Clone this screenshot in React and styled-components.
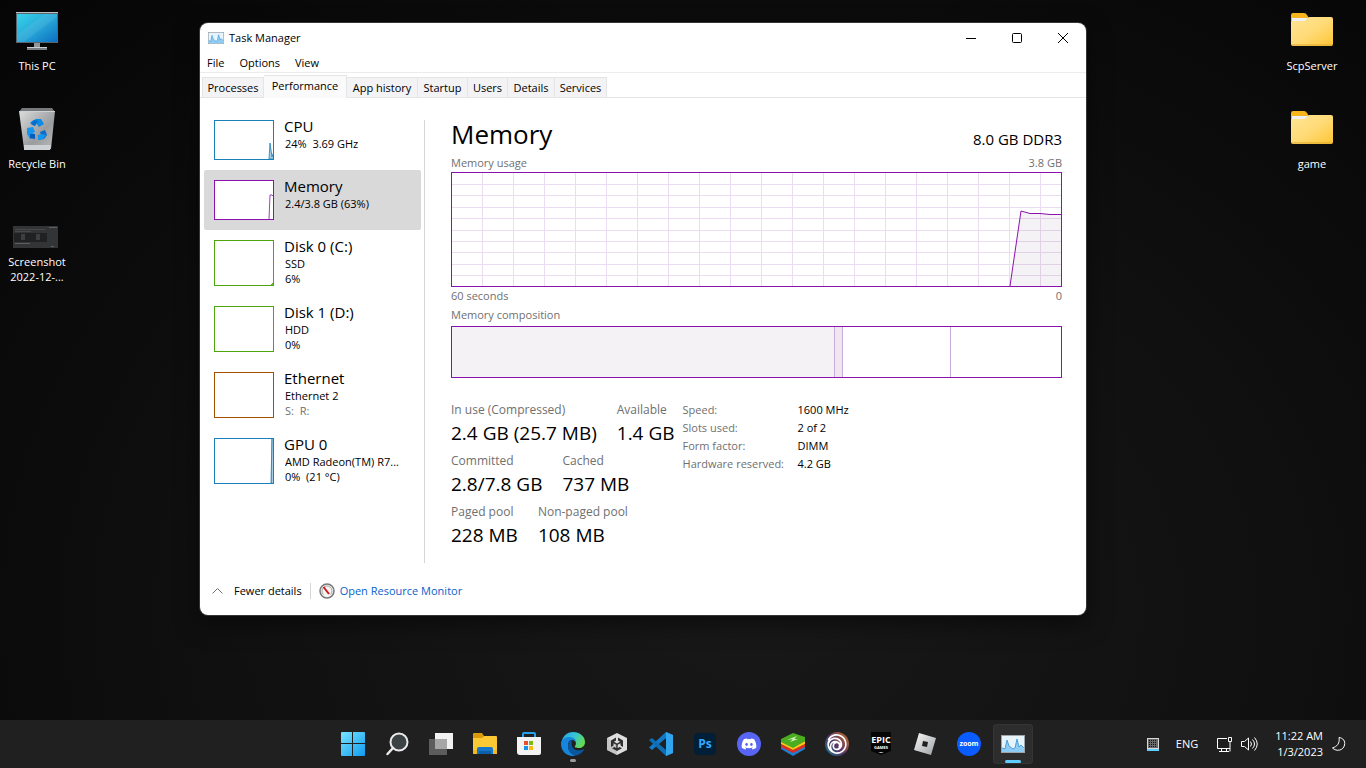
import React from 'react';
import styled, { createGlobalStyle, css } from 'styled-components';
import { FaDiscord } from 'react-icons/fa';
import { SiUbisoft } from 'react-icons/si';

const GlobalStyle = createGlobalStyle`
  * {
    box-sizing: border-box;
  }

  body {
    margin: 0;
    background: #060606;
    font-family: 'Open Sans', 'Noto Sans', sans-serif;
    font-size: 11px;
    line-height: 16px;
    color: #000;
  }

  button {
    margin: 0;
    padding: 0;
    border: 0;
    background: none;
    color: inherit;
    font: inherit;
    text-align: left;
  }

  svg {
    display: block;
    flex: none;
  }
`;

const Page = styled.div`
  display: flex;
  flex-direction: column;
  min-height: 100vh;
`;

const Desktop = styled.main`
  position: relative;
  flex: 1;
  display: flex;
  justify-content: space-between;
  padding-right: 17px;
  background: radial-gradient(ellipse at 55% 85%, #181818 0%, #111 45%, #050505 100%);
`;

const IconColumn = styled.div`
  display: flex;
  flex-direction: column;
  width: 74px;
`;

const Shortcut = styled.button`
  display: flex;
  flex-direction: column;
  align-items: center;
  height: 98px;
  padding-top: 8px;
  color: #fff;
  line-height: 15px;
  text-align: center;
`;

const ShortcutArt = styled.span`
  display: flex;
  align-items: center;
  justify-content: center;
  height: 50px;
  padding-bottom: 4px;
  flex: none;
`;

/* window */

const Window = styled.section`
  position: absolute;
  top: 23px;
  left: 200px;
  right: 280px;
  background: #fff;
  border-radius: 8px;
  box-shadow: 0 0 0 1px #353535, 0 8px 24px rgba(0, 0, 0, 0.5);
  overflow: hidden;
`;

const TitleBar = styled.header`
  display: flex;
  align-items: center;
  gap: 5px;
  height: 30px;
  padding-left: 8px;
`;

const Title = styled.h1`
  flex: 1;
  margin: 0;
  font-size: 11px;
  font-weight: 400;
`;

const CaptionButtons = styled.div`
  display: flex;
`;

const CaptionButton = styled.button`
  display: flex;
  align-items: center;
  justify-content: center;
  width: 46px;
  height: 30px;
`;

const MenuBar = styled.nav`
  display: flex;
  align-items: center;
  gap: 15px;
  height: 20px;
  padding-left: 7px;
  border-bottom: 1px solid #ececec;
`;

const TabStrip = styled.div`
  display: flex;
  align-items: flex-end;
  height: 25px;
  padding-left: 2px;
  box-shadow: inset 0 -1px #e5e5e5;
`;

const Tab = styled.button`
  width: ${({ $width }) => $width}px;
  height: 21px;
  border: 1px solid #e5e5e5;
  border-left-width: 0;
  background: #f3f2f5;
  text-align: center;
  white-space: nowrap;

  &:first-child {
    border-left-width: 1px;
  }

  ${({ $active }) => $active && css`
    height: 23px;
    padding-bottom: 2px;
    border-bottom: 0;
    background: #fafafa;
  `}
`;

const Body = styled.div`
  display: flex;
  min-height: 469px;
  padding: 12px 24px 4px 4px;
`;

const Sidebar = styled.div`
  width: 217px;
  flex: none;
`;

const Resource = styled.button`
  display: flex;
  align-items: flex-start;
  gap: 10px;
  width: 100%;
  height: ${({ $tall }) => ($tall ? 66 : 60)}px;
  padding: 6px 10px;
  border-radius: 2px;
  background: ${({ $selected }) => ($selected ? '#d9d9d9' : 'transparent')};
`;

const Thumb = styled.svg`
  width: 60px;
  height: ${({ $tall }) => ($tall ? 46 : 40)}px;
  margin-top: 4px;
  border: 1px solid ${({ $color }) => $color};
  background: #fff;
`;

const ResourceText = styled.span`
  display: flex;
  flex-direction: column;
  min-width: 0;
`;

const ResourceName = styled.span`
  font-size: 15px;
  line-height: 20px;
`;

const ResourceLine = styled.span`
  padding-left: 1px;
  color: ${({ $muted }) => ($muted ? '#707070' : '#000')};
  line-height: 15px;
  white-space: pre;
`;

const Divider = styled.div`
  width: 1px;
  margin: 10px 26px 0 3px;
  background: #d5d5d5;
`;

const Details = styled.div`
  flex: 1;
  min-width: 0;
`;

const Heading = styled.div`
  display: flex;
  align-items: flex-end;
  justify-content: space-between;
  height: 44px;
`;

const ResourceTitle = styled.h2`
  margin: 0;
  font-size: 26px;
  font-weight: 400;
  line-height: 40px;
`;

const Capacity = styled.span`
  font-size: 15px;
  line-height: 30px;
`;

const Caption = styled.div`
  display: flex;
  justify-content: space-between;
  height: ${({ $height }) => $height}px;
  color: #707070;
  line-height: 18px;
`;

const Graph = styled.svg`
  width: 100%;
  height: 115px;
  border: 1px solid #8b12ae;
`;

const Composition = styled.div`
  display: flex;
  height: 52px;
  border: 1px solid #8b12ae;
`;

const Segment = styled.div`
  flex: ${({ $share }) => $share} 0 0;
  background: ${({ $fill }) => $fill};

  & + & {
    border-left: 1px solid #c9add6;
  }
`;

const Stats = styled.div`
  display: flex;
  gap: 8px;
  padding-top: 23px;
`;

const StatRow = styled.dl`
  display: flex;
  gap: 20px;
  margin: 0;
  height: 51px;
`;

const StatLabel = styled.dt`
  color: #707070;
  font-size: 12px;
  line-height: 18px;
`;

const StatValue = styled.dd`
  margin: 0;
  font-size: 19px;
  line-height: 28px;
`;

const Facts = styled.dl`
  display: grid;
  grid-template-columns: 115px auto;
  grid-auto-rows: 18px;
  align-content: start;
  margin: 0;
  line-height: 18px;

  dt {
    color: #707070;
  }

  dd {
    margin: 0;
  }
`;

const Footer = styled.footer`
  display: flex;
  align-items: center;
  height: 48px;
  padding-left: 12px;
`;

const FewerButton = styled.button`
  display: flex;
  align-items: center;
  gap: 11px;
  padding-right: 8px;
`;

const MonitorLink = styled.a`
  display: flex;
  align-items: center;
  gap: 5px;
  padding-left: 8px;
  border-left: 1px solid #d5d5d5;
  color: #0a5fcb;
  text-decoration: none;
`;

/* taskbar */

const Taskbar = styled.nav`
  display: grid;
  grid-template-columns: 1fr auto 1fr;
  align-items: center;
  height: 48px;
  background: #202020;
  color: #fff;
`;

const Apps = styled.div`
  grid-column: 2;
  display: flex;
  gap: 4px;
`;

const AppButton = styled.button`
  position: relative;
  display: flex;
  align-items: center;
  justify-content: center;
  width: 40px;
  height: 40px;
  border-radius: 4px;

  ${({ $state }) => $state && css`
    &::after {
      content: '';
      position: absolute;
      bottom: ${$state === 'active' ? 1 : 2}px;
      left: 50%;
      width: ${$state === 'active' ? 16 : 6}px;
      height: 3px;
      border-radius: 2px;
      background: ${$state === 'active' ? '#60cdff' : '#9a9a9a'};
      transform: translateX(-50%);
    }
  `}

  ${({ $state }) => $state === 'active' && css`
    background: #2d2d2d;
    box-shadow: inset 0 0 0 1px #353535;
  `}
`;

const Tray = styled.div`
  display: flex;
  align-items: center;
  justify-content: flex-end;
  padding-right: 19px;
`;

const TrayButton = styled.button`
  display: flex;
  align-items: center;
  gap: 8px;
  margin-right: ${({ $space }) => $space || 0}px;
  text-align: right;
`;

const MonitorArt = () => (
  <svg width="44" height="40" viewBox="0 0 44 40">
    <defs>
      <linearGradient id="screen" x1="0" y1="0" x2="1" y2="1">
        <stop offset="0" stopColor="#35d5ea" />
        <stop offset="0.5" stopColor="#28a8d8" />
        <stop offset="1" stopColor="#0b6fc2" />
      </linearGradient>
    </defs>
    <path d="M1 1h42v31H1z" fill="#59656d" />
    <path d="M1 1h42v1H1z" fill="#b8c0c4" />
    <path d="M2 3h40v28H2z" fill="url(#screen)" />
    <path d="M2 24L30 3h12v3L9 31H2z" fill="#fff" opacity="0.07" />
    <path d="M19 32h6v4h-6z" fill="#8e979c" />
    <path d="M12 36h20v3H12z" fill="#777f85" />
    <path d="M12 36h20v1H12z" fill="#c9ced1" />
  </svg>
);

const BinArt = () => (
  <svg width="38" height="44" viewBox="0 0 38 44">
    <defs>
      <linearGradient id="bin" x1="0" y1="0" x2="1" y2="1">
        <stop offset="0" stopColor="#dcdcdc" />
        <stop offset="0.6" stopColor="#9a9c9e" />
        <stop offset="1" stopColor="#b9bbbd" />
      </linearGradient>
    </defs>
    <path d="M4 1h30l3 4H1z" fill="#77797b" />
    <path d="M1 4h36l-4 38H6z" fill="url(#bin)" />
    <path d="M1 4h36v1H1zM6 38h27l-1 5H6z" fill="#cfd2d4" />
    <path d="M14 14l4-2h5l3 5-5 3-3-4-2 3-4-3z" fill="#0a8be6" />
    <path d="M13 17l3-4 4 1-3 5zM27 23l2 5-3 4-6 1v-5h3l-1-3z" fill="#0a6ccc" />
    <path d="M20 28l4-1 4 1-3 4-5 1zM9 21l6-1 2 5-2 1 2 5-5 1-3-5z" fill="#1495f0" />
    <path d="M12 27h5v5l-5-1z" fill="#075cb8" />
  </svg>
);

const ScreenshotArt = () => (
  <svg width="48" height="44" viewBox="0 -21 48 44">
    <path d="M0 0h45v22H0z" fill="#333435" />
    <path d="M2 3h30v1H2zM2 5h16v1H2z" fill="#484949" />
    <path d="M1 7h33v9H1z" fill="#202122" />
    <path d="M8 8h4v6H8zM23 8h4v6h-4z" fill="#3d3e3f" />
    <path d="M2 17h15v1H2zM38 20h3v1h-3zM36 1h8v1h-8z" fill="#5e5f60" />
  </svg>
);

const FolderArt = () => (
  <svg width="44" height="38" viewBox="0 0 44 38">
    <defs>
      <linearGradient id="folder" x1="0" y1="0" x2="1" y2="1">
        <stop offset="0" stopColor="#ffe596" />
        <stop offset="0.5" stopColor="#ffdb78" />
        <stop offset="1" stopColor="#fdc532" />
      </linearGradient>
    </defs>
    <path d="M1 3q0-2 2-2h11q2 0 3 2l2 3H42v20H1z" fill="#f7b51c" />
    <path d="M2 6h16l-3 4H2z" fill="#eef0f4" />
    <path d="M1 10q0-1 1-1h12q2 0 3-2l2-2h22q2 0 2 2v25q0 2-2 2H3q-2 0-2-2z" fill="url(#folder)" />
    <path d="M2 33h40" stroke="#dfa72c" />
  </svg>
);

const TaskIcon = ({ width = 16, height = 12 }) => (
  <svg width={width} height={height} viewBox="0 0 24 18" preserveAspectRatio="none">
    <path d="M0 0h24v18H0z" fill="#9da6ac" />
    <path d="M1 1h22v16H1z" fill="#e8f4fb" />
    <path d="M1 13l3 1 2-9 2 6 4 3 2-1 2-9 2 8 2-2 3 4v3H1z" fill="#8dcdf3" />
    <path d="M1 13l3 1 2-9 2 6 4 3 2-1 2-9 2 8 2-2 3 3" fill="none" stroke="#4a9fdf" />
  </svg>
);

const GaugeIcon = () => (
  <svg width="16" height="16" viewBox="0 0 16 16">
    <circle cx="8" cy="8" r="7" fill="#f5f5f5" stroke="#777" strokeWidth="1.5" />
    <path d="M4.500 11.500a5 5 0 1 1 7 0" fill="none" stroke="#a7a7a7" />
    <path d="M4.500 4l5.500 7" stroke="#d01616" strokeWidth="2" />
  </svg>
);

const StartIcon = () => (
  <svg width="24" height="24" viewBox="0 0 24 24">
    <defs>
      <linearGradient id="start" gradientUnits="userSpaceOnUse" x1="0" y1="0" x2="24" y2="24">
        <stop offset="0" stopColor="#79e4ff" />
        <stop offset="1" stopColor="#109bf0" />
      </linearGradient>
    </defs>
    <path d="M0 1q0-1 1-1h10v11H0zM12 0h11q1 0 1 1v10H12zM0 12h11v12H1q-1 0-1-1zM12 12h12v11q0 1-1 1H12z" fill="url(#start)" />
  </svg>
);

const SearchIcon = () => (
  <svg width="24" height="24" viewBox="0 0 24 24" fill="#3c4144" stroke="#eaeaea" strokeLinecap="round">
    <circle cx="14" cy="10" r="8.5" strokeWidth="2" />
    <path d="M8 16l-5.500 6" strokeWidth="2.500" />
  </svg>
);

const TaskViewIcon = () => (
  <svg width="24" height="24" viewBox="0 0 24 24">
    <path d="M6 1h18v16H6z" fill="#f1f1f1" />
    <path d="M0 7h18v16H0z" fill="#5c5c5c" />
    <path d="M6 7h12v10H6z" fill="#a6a6a6" />
  </svg>
);

const ExplorerIcon = () => (
  <svg width="24" height="24" viewBox="0 0 24 24">
    <path d="M0 2q0-1 1-1h8l2 3-2 3H0z" fill="#d99a0b" />
    <path d="M0 6h9l2-2h12q1 0 1 1v17H0z" fill="#fbc934" />
    <path d="M0 18h24v4H0z" fill="#f2b824" />
    <path d="M4 22v-5q0-2 2-2h12q2 0 2 2v5z" fill="#1477cc" />
    <path d="M6 19h12v3H6z" fill="#0d5faa" />
  </svg>
);

const StoreIcon = () => (
  <svg width="24" height="24" viewBox="0 0 24 24">
    <path d="M6 6V2q0-1 1-1h10q1 0 1 1v4" fill="none" stroke="#24a2ec" strokeWidth="2" />
    <path d="M0 5h24v16q0 2-2 2H3q-3 0-3-3z" fill="#f3f3f3" />
    <path d="M7 9h4v4H7z" fill="#e8502a" />
    <path d="M12 9h4v4h-4z" fill="#7dba10" />
    <path d="M7 14h4v4H7z" fill="#1695e6" />
    <path d="M12 14h4v4h-4z" fill="#fcb911" />
  </svg>
);

const EdgeIcon = () => (
  <svg width="24" height="24" viewBox="0 0 24 24">
    <defs>
      <linearGradient id="edgeTop" x1="0" y1="0" x2="1" y2="0.5">
        <stop offset="0" stopColor="#259ee0" />
        <stop offset="0.5" stopColor="#34c3dc" />
        <stop offset="1" stopColor="#63d957" />
      </linearGradient>
    </defs>
    <path d="M0.500 11C1 4.500 6 0 12 0c7 0 12 4.500 12 10 0 4-3 6-6 6-3 0-5-1-4-2 2-2 1-7-4-7-4 0-8 2-9.500 4z" fill="url(#edgeTop)" />
    <path d="M0 12c0-4 4-7 8-7 5 0 7 3 7 5-1-1-2-2-4-2-3 0-4 3-4 6 0 5 4 9 8 9.500-8 2-15-3.500-15-11.500z" fill="#1685dc" />
    <path d="M11 8c-3 1-4 3-4 6 0 5 4 9 8 9.500 3-.5 6-2.500 8-5.500.5-.8 0-1-1-.6-7 2.600-13-.4-11-9.400z" fill="#0b579f" />
  </svg>
);

const UnityIcon = () => (
  <svg width="22" height="22" viewBox="0 0 22 22">
    <path d="M11 0l10 5v12l-10 5-10-5V5z" fill="#dedede" />
    <path d="M11 11v11L1 17V5z" fill="#a9a9a9" opacity="0.5" />
    <path d="M10 4.500v3L8 8.800l3 1.700 3-1.700-2-1.300v-3l5 3v6.500l-2.500-1.500v-2.300l-2.800 1.500V15l2-1.100 2.300 1.400L11 18l-5-2.700 2.300-1.400 2 1.100v-3.300L7.500 10.200v2.300L5 14V7.500z" fill="#2f2f2f" />
  </svg>
);

const CodeIcon = () => (
  <svg width="24" height="24" viewBox="0 0 24 24">
    <path d="M17 0l7 3v18l-7 3V6L3 18 0 15.500z" fill="#1179c9" />
    <path d="M0 8l3-2 14 12v6L0 8z" fill="#0d6eb8" />
    <path d="M17 0l7 3v18l-7 3z" fill="#32a5ef" />
  </svg>
);

const PhotoshopIcon = () => (
  <svg width="22" height="22" viewBox="0 0 22 22">
    <rect width="22" height="22" rx="4" fill="#001e36" />
    <text x="11" y="15" fill="#31a8ff" fontFamily="Open Sans" fontSize="12" fontWeight="700" textAnchor="middle">Ps</text>
  </svg>
);

const DiscordIcon = () => (
  <svg width="24" height="24" viewBox="0 0 24 24">
    <circle cx="12" cy="12" r="12" fill="#5865f2" />
    <FaDiscord x="4" y="4" size="16" color="#fff" />
  </svg>
);

const StacksIcon = () => (
  <svg width="24" height="24" viewBox="0 0 24 24">
    <path d="M0 14l12 6 12-6v3l-12 7-12-7z" fill="#1b7fd2" />
    <path d="M0 12l12 6 12-6v3l-12 6-12-6z" fill="#e02b20" />
    <path d="M0 9l12 6 12-6v3l-12 6-12-6z" fill="#fbc31c" />
    <path d="M0 7l12-6 12 4v4l-12 7L0 10z" fill="#4aac1f" />
    <path d="M6 8l10-4-3 3h4l-8 3 3-3z" fill="#d9f6c3" />
  </svg>
);

const UbisoftIcon = () => (
  <svg width="24" height="24" viewBox="0 0 24 24">
    <defs>
      <linearGradient id="connect" x1="0" y1="1" x2="1" y2="0.200">
        <stop offset="0" stopColor="#147f91" />
        <stop offset="0.500" stopColor="#583568" />
        <stop offset="1" stopColor="#b8672e" />
      </linearGradient>
    </defs>
    <circle cx="12" cy="12" r="12" fill="url(#connect)" />
    <SiUbisoft x="2" y="2" size="20" color="#fff" />
  </svg>
);

const EpicIcon = () => (
  <svg width="22" height="24" viewBox="0 0 22 24">
    <path d="M1 1q0-1 1-1h18q1 0 1 1v18l-10 4-10-4z" fill="#050505" />
    <text x="11" y="11" fill="#fff" fontFamily="Open Sans" fontSize="9" fontWeight="700" textAnchor="middle">EPIC</text>
    <text x="11" y="17" fill="#fff" fontFamily="Open Sans" fontSize="4" fontWeight="700" textAnchor="middle">GAMES</text>
    <path d="M8 20h6l-3 1z" fill="#ddd" />
  </svg>
);

const RobloxIcon = () => (
  <svg width="24" height="24" viewBox="0 0 24 24">
    <defs>
      <linearGradient id="roblox" x1="0" y1="0" x2="1" y2="1">
        <stop offset="0" stopColor="#fafafa" />
        <stop offset="1" stopColor="#9d9fa2" />
      </linearGradient>
    </defs>
    <path d="M6 1l17 5-5 17-17-5zM10 9l-1 5 5 1 1-5z" fill="url(#roblox)" fillRule="evenodd" />
  </svg>
);

const ZoomIcon = () => (
  <svg width="24" height="24" viewBox="0 0 24 24">
    <circle cx="12" cy="12" r="12" fill="#0b5cff" />
    <text x="12" y="14" fill="#fff" fontFamily="Open Sans" fontSize="7" fontWeight="700" textAnchor="middle">zoom</text>
  </svg>
);

const KEY_DOTS = [2, 4, 6, 8].flatMap((y) => [2, 4, 6, 8].map((x) => [x, y]));

const resources = [
  { name: 'CPU', lines: ['24%  3.69 GHz'], color: '#1b7fb8', path: 'M54 38L55 22L57 36L58 33L59 30V38Z' },
  { name: 'Memory', lines: ['2.4/3.8 GB (63%)'], color: '#8b12ae', path: 'M54 38L55 14L57 14L59 16', open: true, selected: true },
  { name: 'Disk 0 (C:)', lines: ['SSD', '6%'], color: '#4da60c', path: 'M56 44L58 42V44Z' },
  { name: 'Disk 1 (D:)', lines: ['HDD', '0%'], color: '#4da60c' },
  { name: 'Ethernet', lines: ['Ethernet 2', 'S:  R:'], color: '#a74f01', muted: true },
  { name: 'GPU 0', lines: ['AMD Radeon(TM) R7...', '0%  (21 °C)'], color: '#1b7fb8', path: 'M56 44L57 0V44Z' },
];

const tabs = [
  ['Processes', 62],
  ['Performance', 83],
  ['App history', 71],
  ['Startup', 50],
  ['Users', 40],
  ['Details', 47],
  ['Services', 52],
];

const stats = [
  [['In use (Compressed)', '2.4 GB (25.7 MB)'], ['Available', '1.4 GB']],
  [['Committed', '2.8/7.8 GB'], ['Cached', '737 MB']],
  [['Paged pool', '228 MB'], ['Non-paged pool', '108 MB']],
];

const facts = [
  ['Speed:', '1600 MHz'],
  ['Slots used:', '2 of 2'],
  ['Form factor:', 'DIMM'],
  ['Hardware reserved:', '4.2 GB'],
];

const segments = [
  [382, '#f4f2f5'],
  [7, '#efe6f2'],
  [107, '#fff'],
  [110, '#fff'],
];

const apps = [
  ['Start', StartIcon],
  ['Search', SearchIcon],
  ['Task view', TaskViewIcon],
  ['File Explorer', ExplorerIcon],
  ['Microsoft Store', StoreIcon],
  ['Edge', EdgeIcon, 'running'],
  ['Unity Hub', UnityIcon],
  ['Visual Studio Code', CodeIcon],
  ['Photoshop', PhotoshopIcon],
  ['Discord', DiscordIcon],
  ['BlueStacks', StacksIcon],
  ['Ubisoft Connect', UbisoftIcon],
  ['Epic Games', EpicIcon],
  ['Roblox', RobloxIcon],
  ['Zoom', ZoomIcon],
  ['Task Manager', () => <TaskIcon width={24} height={18} />, 'active'],
];

const DesktopItem = ({ art, label }) => (
  <Shortcut>
    <ShortcutArt>{art}</ShortcutArt>
    {label}
  </Shortcut>
);

const MemoryGraph = () => (
  <Graph viewBox="0 0 609 113" preserveAspectRatio="none" role="img" aria-label="Memory usage">
    <g fill="#ecdcf1" shapeRendering="crispEdges">
      {Array.from({ length: 19 }, (_, i) => (
        <rect key={i} x={i * 31 + 30} y="0" width="1" height="113" />
      ))}
      {[11, 22, 34, 45, 57, 68, 79, 91, 102].map((y) => (
        <rect key={y} x="0" y={y} width="609" height="1" />
      ))}
    </g>
    <path d="M558 113L569 38L578 40L588 40L598 41H609V113Z" fill="#40284c" fillOpacity="0.06" />
    <path d="M558 113L569 38L578 40.500H588L598 41.500H609" fill="none" stroke="#8b12ae" />
  </Graph>
);

const TaskManager = () => (
  <Window>
    <TitleBar>
      <TaskIcon />
      <Title>Task Manager</Title>
      <CaptionButtons>
        <CaptionButton aria-label="Minimize">
          <svg width="10" height="10"><path d="M0 5.500h10" stroke="#000" /></svg>
        </CaptionButton>
        <CaptionButton aria-label="Maximize">
          <svg width="10" height="10"><rect x="0.500" y="0.500" width="9" height="9" rx="1" fill="none" stroke="#000" /></svg>
        </CaptionButton>
        <CaptionButton aria-label="Close">
          <svg width="10" height="10"><path d="M0 0l10 10M10 0L0 10" stroke="#000" /></svg>
        </CaptionButton>
      </CaptionButtons>
    </TitleBar>
    <MenuBar>
      <button>File</button>
      <button>Options</button>
      <button>View</button>
    </MenuBar>
    <TabStrip role="tablist">
      {tabs.map(([name, width]) => (
        <Tab key={name} role="tab" $width={width} $active={name === 'Performance'} aria-selected={name === 'Performance'}>
          {name}
        </Tab>
      ))}
    </TabStrip>
    <Body>
      <Sidebar>
        {resources.map(({ name, lines, color, path, open, selected, muted }) => {
          const tall = lines.length > 1;
          return (
            <Resource key={name} $tall={tall} $selected={selected}>
              <Thumb $tall={tall} $color={color}>
                {path && <path d={path} fill={open ? 'none' : color} fillOpacity="0.4" stroke={color} strokeOpacity="0.8" />}
              </Thumb>
              <ResourceText>
                <ResourceName>{name}</ResourceName>
                {lines.map((line, i) => (
                  <ResourceLine key={line} $muted={muted && i === 1}>{line}</ResourceLine>
                ))}
              </ResourceText>
            </Resource>
          );
        })}
      </Sidebar>
      <Divider />
      <Details>
        <Heading>
          <ResourceTitle>Memory</ResourceTitle>
          <Capacity>8.0 GB DDR3</Capacity>
        </Heading>
        <Caption $height={18}>
          <span>Memory usage</span>
          <span>3.8 GB</span>
        </Caption>
        <MemoryGraph />
        <Caption $height={19}>
          <span>60 seconds</span>
          <span>0</span>
        </Caption>
        <Caption $height={20}>Memory composition</Caption>
        <Composition>
          {segments.map(([share, fill]) => (
            <Segment key={share} $share={share} $fill={fill} />
          ))}
        </Composition>
        <Stats>
          <div>
            {stats.map((row) => (
              <StatRow key={row[0][0]}>
                {row.map(([label, value]) => (
                  <div key={label}>
                    <StatLabel>{label}</StatLabel>
                    <StatValue>{value}</StatValue>
                  </div>
                ))}
              </StatRow>
            ))}
          </div>
          <Facts>
            {facts.map(([label, value]) => (
              <React.Fragment key={label}>
                <dt>{label}</dt>
                <dd>{value}</dd>
              </React.Fragment>
            ))}
          </Facts>
        </Stats>
      </Details>
    </Body>
    <Footer>
      <FewerButton>
        <svg width="11" height="8" viewBox="0 0 11 8"><path d="M0.500 6.500l5-5 5 5" fill="none" stroke="#707070" /></svg>
        Fewer details
      </FewerButton>
      <MonitorLink href="#resource-monitor">
        <GaugeIcon />
        Open Resource Monitor
      </MonitorLink>
    </Footer>
  </Window>
);

const App = () => (
  <Page>
    <GlobalStyle />
    <Desktop>
      <IconColumn>
        <DesktopItem art={<MonitorArt />} label="This PC" />
        <DesktopItem art={<BinArt />} label="Recycle Bin" />
        <DesktopItem art={<ScreenshotArt />} label="Screenshot 2022-12-..." />
      </IconColumn>
      <IconColumn>
        <DesktopItem art={<FolderArt />} label="ScpServer" />
        <DesktopItem art={<FolderArt />} label="game" />
      </IconColumn>
      <TaskManager />
    </Desktop>
    <Taskbar>
      <Apps>
        {apps.map(([label, Icon, state]) => (
          <AppButton key={label} aria-label={label} $state={state}>
            <Icon />
          </AppButton>
        ))}
      </Apps>
      <Tray>
        <TrayButton $space={17} aria-label="Touch keyboard">
          <svg width="12" height="13" viewBox="0 0 12 13">
            <path d="M0 0h12v13H0z" fill="#d8d8d8" />
            <path d="M1 1h10v9H1z" fill="#6a6a6a" />
            <path d="M0 11h12v2H0z" fill="#60cdff" />
            {KEY_DOTS.map(([x, y]) => (
              <rect key={`${x}-${y}`} x={x} y={y} width="1" height="1" fill="#111" />
            ))}
          </svg>
        </TrayButton>
        <TrayButton $space={18}>ENG</TrayButton>
        <TrayButton $space={17} aria-label="Network and volume">
          <svg width="17" height="17" viewBox="0 0 17 17" fill="none" stroke="#fff">
            <path d="M11 2.500H1.500v10H14M5.500 12.500v3M10.500 12.500v3M3 15.500h10M12.500 1.500h3v4h-3zM14 5.500v10" />
          </svg>
          <svg width="17" height="16" viewBox="0 0 17 16" fill="none" stroke="#fff">
            <path d="M0.500 5.500h3l4-3.500v12l-4-3.500h-3zM9.500 5.500q2 2.500 0 5M11.500 3.500q4 4.500 0 9M13.500 1.500q5.500 6.500 0 13" />
          </svg>
        </TrayButton>
        <TrayButton aria-label="Clock and notifications">
          <span>
            11:22 AM
            <br />
            1/3/2023
          </span>
          <svg width="16" height="16" viewBox="0 0 16 16">
            <path d="M8 1.500c1 6-2 9-6.500 10.500 4 4 11 2.500 12-3C14.500 5 12 2 8 1.500z" fill="none" stroke="#fff" strokeLinejoin="round" />
          </svg>
        </TrayButton>
      </Tray>
    </Taskbar>
  </Page>
);

export default App;
